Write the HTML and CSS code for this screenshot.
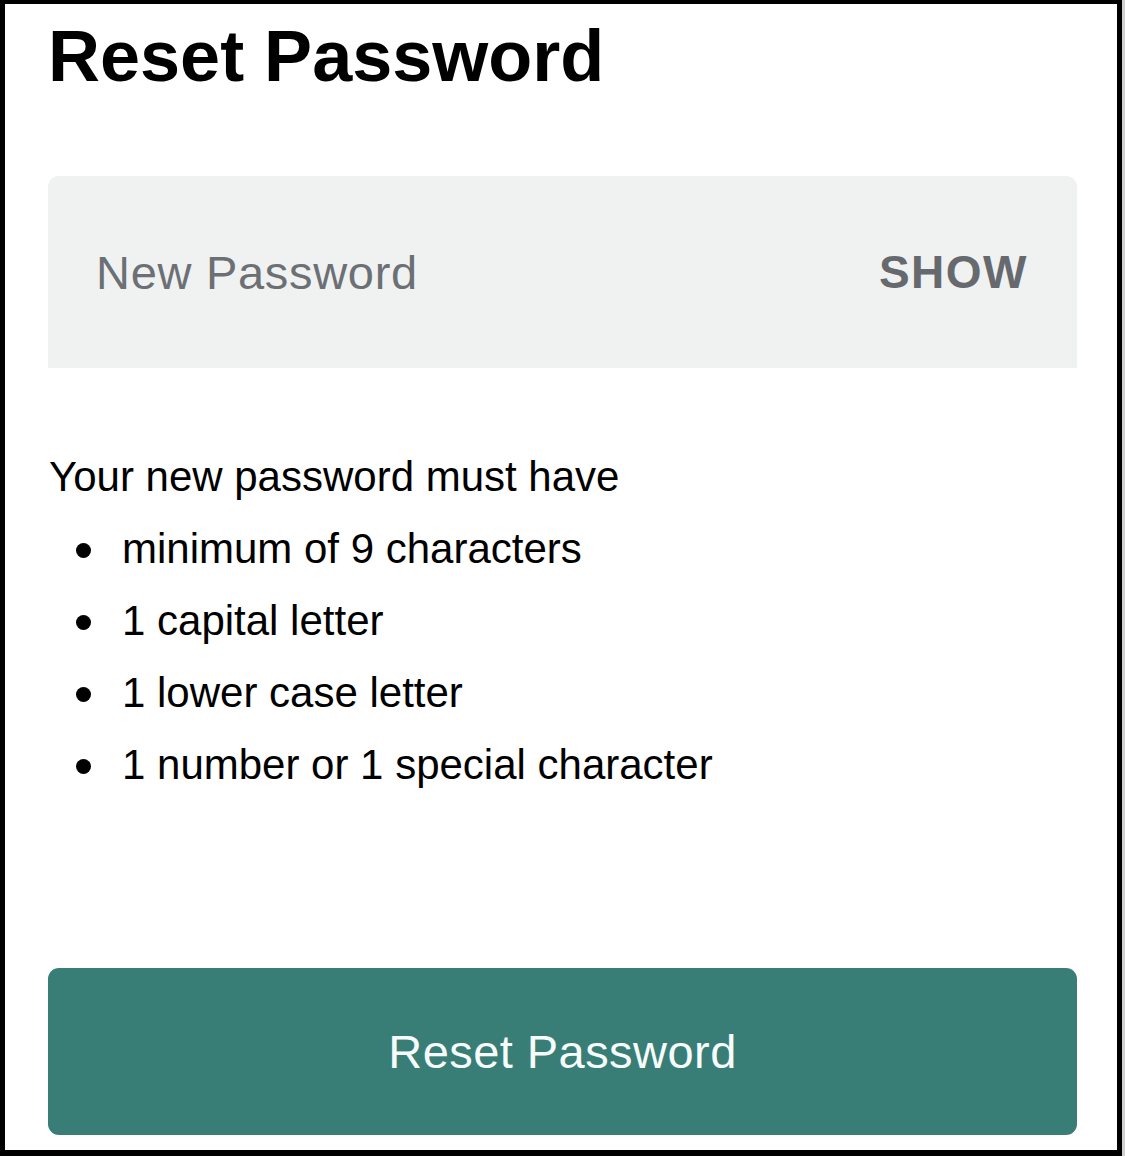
FILE: index.html
```html
<!DOCTYPE html>
<html lang="en">
<head>
<meta charset="utf-8">
<title>Reset Password</title>
<link rel="stylesheet" href="styles.css">
</head>
<body>
<div class="frame">
  <h1 class="title">Reset Password</h1>
  <div class="field">
    <span class="placeholder">New Password</span>
    <span class="show">SHOW</span>
  </div>
  <div class="rules">
    <p class="rules-intro">Your new password must have</p>
    <ul class="rules-list">
      <li>minimum of 9 characters</li>
      <li>1 capital letter</li>
      <li>1 lower case letter</li>
      <li>1 number or 1 special character</li>
    </ul>
  </div>
  <div class="button">Reset Password</div>
</div>
</body>
</html>
```

FILE: styles.css
```css
html, body {
  margin: 0;
  padding: 0;
}
body {
  background: #cfcfcf;
  font-family: "Liberation Sans", Arial, Helvetica, sans-serif;
  width: 1125px;
  height: 1156px;
  overflow: hidden;
}
.frame {
  box-sizing: border-box;
  width: 1122px;
  height: 1156px;
  background: #ffffff;
  border-style: solid;
  border-color: #000000;
  border-width: 4px 5px 6px 5px;
  padding: 0 40px 0 43px;
  display: flex;
  flex-direction: column;
}
.title {
  margin: 16px 0 0 0;
  font-size: 72px;
  line-height: 72px;
  font-weight: 700;
  color: #000000;
}
.field {
  margin-top: 84px;
  height: 192px;
  flex: none;
  background: #f0f2f1;
  border-radius: 11px 11px 0 0;
  display: flex;
  align-items: center;
  justify-content: space-between;
  padding: 0 50px 0 48px;
}
.placeholder {
  font-size: 47px;
  letter-spacing: 0.7px;
  color: #6c7075;
}
.show {
  font-size: 46px;
  font-weight: 700;
  letter-spacing: 1.5px;
  margin-right: -1px;
  color: #666a6f;
}
.rules {
  margin-top: 73px;
  font-size: 42px;
  line-height: 72px;
  color: #000000;
}
.rules-intro {
  margin: 0;
  padding-left: 1px;
}
.rules-list {
  margin: 0;
  padding: 0;
  list-style: none;
}
.rules-list li {
  position: relative;
  padding-left: 74px;
}
.rules-list li::before {
  content: "";
  position: absolute;
  left: 28px;
  top: 30px;
  width: 15px;
  height: 15px;
  border-radius: 50%;
  background: #000000;
}
.button {
  margin-top: 167px;
  height: 167px;
  flex: none;
  border-radius: 11px;
  background: #387e77;
  color: #f7fcfb;
  font-size: 47px;
  letter-spacing: 0.45px;
  display: flex;
  align-items: center;
  justify-content: center;
}
```
